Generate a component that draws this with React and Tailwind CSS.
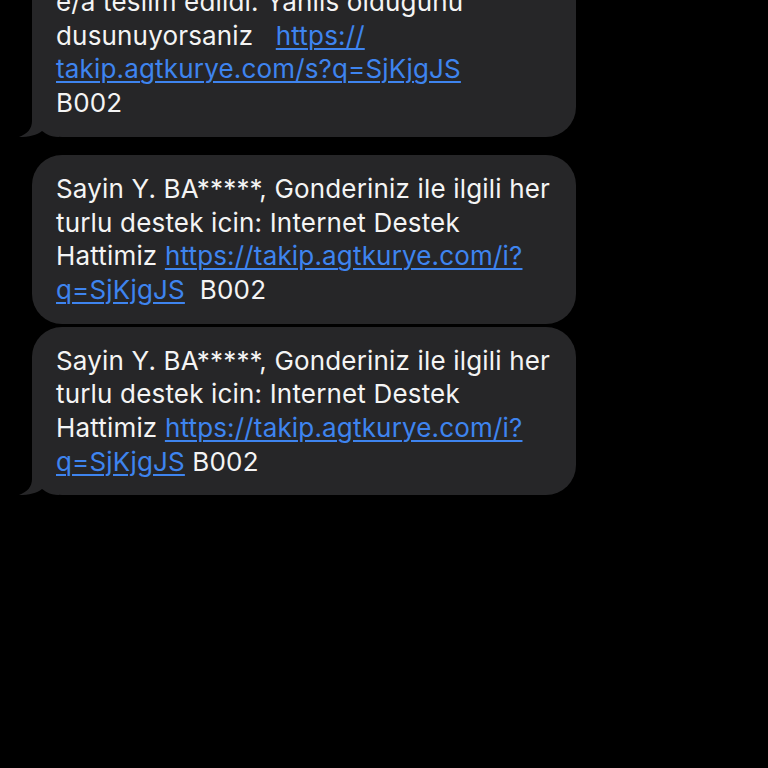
import React from "react";

function Tail() {
  return (
    <svg
      className="absolute left-[-13px] bottom-0"
      width="40"
      height="30"
      viewBox="0 0 40 30"
    >
      <path
        d="M13 0 L13 14 C13 22 8 27 0 30 C10 30 18 28 23 24 C27 27 32 30 40 30 L40 0 Z"
        fill="#262628"
      />
    </svg>
  );
}

function Link({ children }) {
  return <span className="text-[#3e84ef] underline decoration-[1.5px] underline-offset-[3px]">{children}</span>;
}

function Bubble({ children, tail, className = "" }) {
  return (
    <div className={"relative w-[544px] rounded-[30px] bg-[#262628] pl-6 pr-4 py-[17px] " + className}>
      {tail && <Tail />}
      <div className="relative text-[26px] tracking-[0.17px] leading-[33.7px] text-[#f4f4f4] whitespace-pre">{children}</div>
    </div>
  );
}

export default function App() {
  return (
    <div
      className="w-[768px] h-[768px] bg-black overflow-hidden"
      style={{ fontFamily: "Inter, 'Noto Sans', sans-serif" }}
    >
      <div className="flex flex-col pl-8 mt-[-32px]">
        <Bubble tail>
          <div>e/a teslim edildi. Yanlis oldugunu</div>
          <div>
            dusunuyorsaniz   <Link>https://</Link>
          </div>
          <div>
            <Link>takip.agtkurye.com/s?q=SjKjgJS</Link>
          </div>
          <div>B002</div>
        </Bubble>
        <Bubble className="mt-[18px]">
          <div>Sayin Y. BA*****, Gonderiniz ile ilgili her</div>
          <div>turlu destek icin: Internet Destek</div>
          <div>
            Hattimiz <Link>https://takip.agtkurye.com/i?</Link>
          </div>
          <div>
            <Link>q=SjKjgJS</Link>  B002
          </div>
        </Bubble>
        <Bubble tail className="mt-[3px]">
          <div>Sayin Y. BA*****, Gonderiniz ile ilgili her</div>
          <div>turlu destek icin: Internet Destek</div>
          <div>
            Hattimiz <Link>https://takip.agtkurye.com/i?</Link>
          </div>
          <div>
            <Link>q=SjKjgJS</Link> B002
          </div>
        </Bubble>
      </div>
    </div>
  );
}
